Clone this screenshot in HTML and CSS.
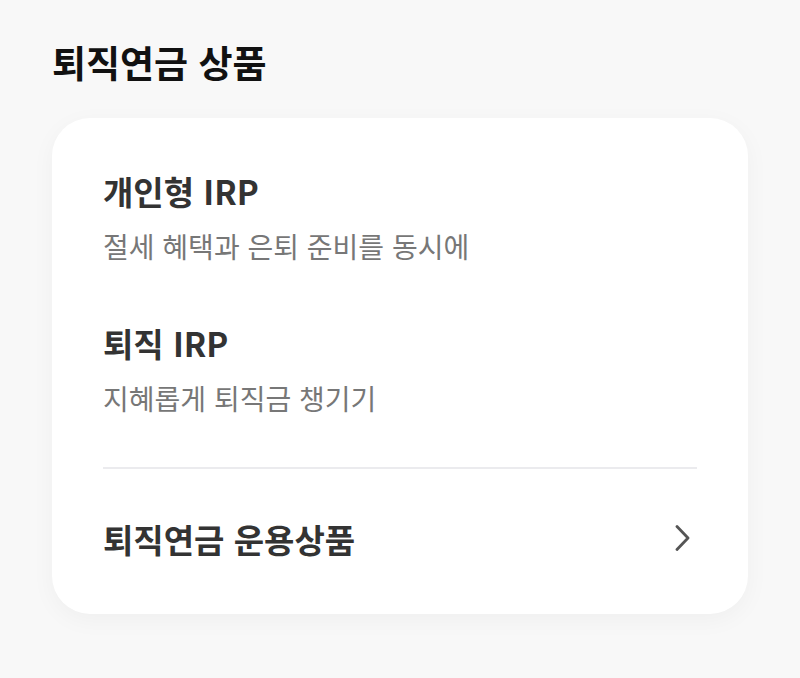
FILE: index.html
```html
<!DOCTYPE html>
<html lang="ko">
<head>
    <meta charset="UTF-8">
    <meta name="viewport" content="width=device-width, initial-scale=1.0">
    <title>퇴직연금 상품</title>
    <link rel="stylesheet" href="styles.css">
</head>
<body>
    <div class="page">
        <h1 class="section-title">퇴직연금 상품</h1>

        <div class="card">
            <!-- Product list -->
            <div class="product-list">
                <div class="product">
                    <div class="product-name">개인형 IRP</div>
                    <div class="product-desc">절세 혜택과 은퇴 준비를 동시에</div>
                </div>
                <div class="product">
                    <div class="product-name">퇴직 IRP</div>
                    <div class="product-desc">지혜롭게 퇴직금 챙기기</div>
                </div>
            </div>

            <div class="divider"></div>

            <!-- Link row -->
            <div class="link-row">
                <span class="link-label">퇴직연금 운용상품</span>
                <svg class="chevron" width="18" height="28" viewBox="0 0 18 28">
                    <path d="M4 1.5 L15 13 L4 24.5" fill="none" stroke="#555" stroke-width="2.8" stroke-linecap="round" stroke-linejoin="round"/>
                </svg>
            </div>
        </div>
    </div>
</body>
</html>
```

FILE: styles.css
```css
/* Base */
body {
    margin: 0;
    padding: 0;
    background-color: #f8f8f8;
    font-family: "Noto Sans CJK KR", "Noto Sans", sans-serif;
    color: #333;
}

.page {
    padding: 36px 52px 40px;
}

.section-title {
    margin: 0 0 30px;
    font-size: 37px;
    font-weight: 700;
    line-height: 52px;
    color: #111;
}

/* Card */
.card {
    background-color: #fff;
    border-radius: 38px;
    padding: 51px 51px 53px;
    box-shadow: 0 6px 24px rgba(0, 0, 0, 0.04);
}

.product-list {
    display: flex;
    flex-direction: column;
    gap: 55px;
}

.product-name {
    font-size: 33px;
    font-weight: 700;
    line-height: 44px;
    color: #333;
}

.product-desc {
    margin-top: 13px;
    font-size: 28px;
    line-height: 40px;
    color: #777;
}

.divider {
    height: 2px;
    background-color: #ebebee;
    margin-top: 49px;
}

.link-row {
    display: flex;
    justify-content: space-between;
    align-items: center;
    margin-top: 48px;
}

.link-label {
    font-size: 33px;
    font-weight: 700;
    line-height: 44px;
    color: #333;
}

.chevron {
    margin-right: 6px;
}
```
